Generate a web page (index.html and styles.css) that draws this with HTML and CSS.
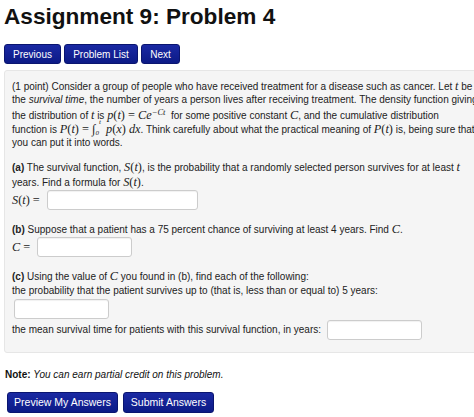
FILE: index.html
```html
<!DOCTYPE html>
<html>
<head>
<meta charset="utf-8">
<link rel="stylesheet" href="styles.css">
</head>
<body>
<div class="page">
  <h1 class="title">Assignment 9: Problem 4</h1>
  <div class="nav">
    <span class="btn b-prev">Previous</span>
    <span class="btn b-list">Problem List</span>
    <span class="btn b-next">Next</span>
  </div>
  <div class="problem">
    <div class="para">
      <span class="ln">(1 point) Consider a group of people who have received treatment for a disease such as cancer. Let <span class="m">t</span> be</span>
      <span class="ln">the <em>survival time</em>, the number of years a person lives after receiving treatment. The density function giving</span>
      <span class="ln">the distribution of <span class="m">t</span> is <span class="m">p</span><span class="mr">(</span><span class="m">t</span><span class="mr">) = </span><span class="m">Ce</span><sup class="m sup">−Ct</sup>&nbsp; for some positive constant <span class="m">C</span>, and the cumulative distribution</span>
      <span class="ln">function is <span class="m">P</span><span class="mr">(</span><span class="m">t</span><span class="mr">) = </span><span class="int">∫<sub class="lim lo">0</sub><sup class="lim hi">t</sup></span><span class="m">p</span><span class="mr">(</span><span class="m">x</span><span class="mr">) </span><span class="m">dx</span>. Think carefully about what the practical meaning of <span class="m">P</span><span class="mr">(</span><span class="m">t</span><span class="mr">)</span> is, being sure that</span>
      <span class="ln">you can put it into words.</span>
    </div>

    <div class="para part">
      <span class="ln"><b>(a)</b> The survival function, <span class="m">S</span><span class="mr">(</span><span class="m">t</span><span class="mr">)</span>, is the probability that a randomly selected person survives for at least <span class="m">t</span></span>
      <span class="ln">years. Find a formula for <span class="m">S</span><span class="mr">(</span><span class="m">t</span><span class="mr">)</span>.</span>
    </div>
    <div class="row"><span class="m">S</span><span class="mr">(</span><span class="m">t</span><span class="mr">) =</span><span class="input w151 ml-s"></span></div>

    <div class="para part p-b">
      <span class="ln"><b>(b)</b> Suppose that a patient has a 75 percent chance of surviving at least 4 years. Find <span class="m">C</span>.</span>
    </div>
    <div class="row"><span class="m">C</span><span class="mr"> =</span><span class="input w95 ml-c"></span></div>

    <div class="para part p-b">
      <span class="ln"><b>(c)</b> Using the value of <span class="m">C</span> you found in (b), find each of the following:</span>
      <span class="ln">the probability that the patient survives up to (that is, less than or equal to) 5 years:</span>
    </div>
    <div class="row"><span class="input w95 ml-p"></span></div>
    <div class="row last">the mean survival time for patients with this survival function, in years:<span class="input w95 ml-m"></span></div>
  </div>
  <p class="note"><b>Note:</b> <i>You can earn partial credit on this problem.</i></p>
  <div class="actions">
    <span class="btn big b-prev2">Preview My Answers</span>
    <span class="btn big b-sub">Submit Answers</span>
  </div>
</div>
</body>
</html>
```
FILE: styles.css
```css
html, body {
  margin: 0;
  padding: 0;
  overflow: hidden;
  background: #ffffff;
}
body {
  font-family: "Liberation Sans", Arial, sans-serif;
  color: #1a1a1a;
  width: 474px;
  height: 417px;
}
.page {
  padding: 0 0 0 4px;
  width: 520px;
}
.title {
  margin: 0;
  padding-top: 3px;
  font-size: 22.6px;
  line-height: 28px;
  font-weight: bold;
  color: #111;
}
.nav {
  display: flex;
  gap: 3px;
  margin-top: 13px;
}
.btn {
  display: inline-flex;
  align-items: center;
  justify-content: center;
  height: 20px;
  padding: 0;
  white-space: nowrap;
  background: linear-gradient(#1a29a3, #0c1a86);
  border: 1px solid #0a1570;
  border-radius: 3px;
  color: #ffffff;
  font-size: 10px;
  box-sizing: border-box;
}
.b-prev { width: 57px; }
.b-list { width: 74px; }
.b-next { width: 39px; }
.problem {
  margin-top: 6px;
  width: 500px;
  background: #f5f5f5;
  border: 1px solid #e6e6e6;
  border-radius: 3px;
  padding: 8px 0 12px 7px;
  box-sizing: border-box;
  font-size: 10px;
  line-height: 14.3px;
  color: #222;
}
.para {
  margin: 0;
}
.ln {
  display: block;
  white-space: nowrap;
  height: 14.3px;
}
.part {
  margin-top: 10px;
}
.part.p-b { margin-top: 12px; }
.m {
  font-family: "Liberation Serif", "Times New Roman", serif;
  font-style: italic;
  font-size: 12.3px;
}
.mr {
  font-family: "Liberation Serif", "Times New Roman", serif;
  font-size: 12.3px;
  white-space: pre;
}
.sup {
  font-size: 8.5px;
  vertical-align: 4px;
  line-height: 0;
}
.int {
  font-family: "Liberation Serif", "Times New Roman", serif;
  font-style: italic;
  font-size: 12.5px;
  position: relative;
  margin-right: 7px;
}
.lim {
  font-size: 7px;
  line-height: 0;
  font-style: italic;
}
.lo { vertical-align: -2px; }
.hi {
  position: absolute;
  left: 7px;
  top: 0;
}
.row {
  display: flex;
  align-items: center;
  margin-top: 1px;
  height: 20px;
}
.row.last { margin-top: 1px; }
.input {
  display: inline-block;
  height: 20px;
  background: #ffffff;
  border: 1px solid #cccccc;
  border-radius: 3px;
  box-sizing: border-box;
  box-shadow: inset 0 1px 1px rgba(0, 0, 0, 0.06);
}
.w151 { width: 151px; }
.w95 { width: 95px; }
.ml-s { margin-left: 7px; }
.ml-c { margin-left: 7px; }
.ml-p { margin-left: 2px; }
.ml-m { margin-left: 6px; }
.note {
  margin: 15px 0 0 1px;
  font-size: 10px;
  line-height: 14px;
  color: #111;
}
.actions {
  display: flex;
  gap: 5px;
  margin: 10px 0 0 3px;
}
.btn.big {
  height: 21px;
  font-size: 10.5px;
}
.b-prev2 { width: 111px; }
.b-sub { width: 91px; }
```
